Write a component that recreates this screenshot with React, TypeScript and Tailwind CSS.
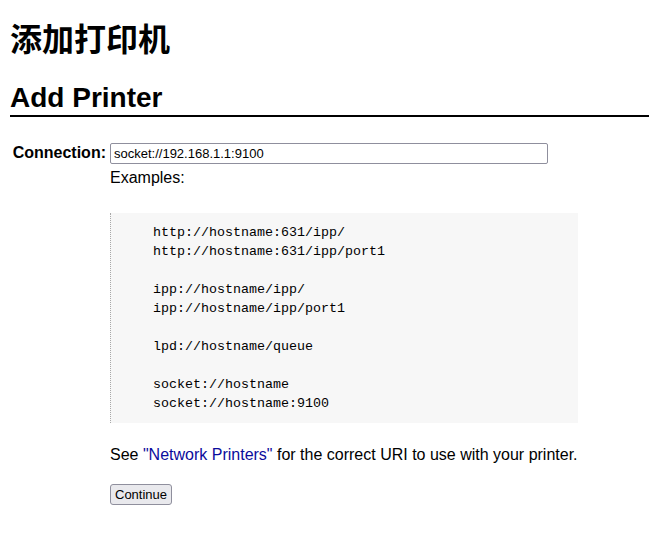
import React from 'react'

const examples = [
  'http://hostname:631/ipp/',
  'http://hostname:631/ipp/port1',
  '',
  'ipp://hostname/ipp/',
  'ipp://hostname/ipp/port1',
  '',
  'lpd://hostname/queue',
  '',
  'socket://hostname',
  'socket://hostname:9100',
]

const App: React.FC = () => {
  return (
    <div className="min-h-screen bg-white px-[10px] text-black font-['Liberation_Sans',Arial,sans-serif]">
      {/* Page titles */}
      <h1 className="pt-[21px] text-[32px] leading-[38px] font-bold font-['Liberation_Sans','Noto_Sans_CJK_SC',sans-serif]">
        添加打印机
      </h1>
      <h2 className="mt-[23px] -mr-[10px] border-b-2 border-black pb-[1px] text-[28px] leading-[32px] font-bold">
        Add Printer
      </h2>

      {/* Form */}
      <div className="mt-[26px] flex">
        <div className="w-[100px] pt-[1px] pr-[4px] text-right text-[16px] leading-[18px] font-bold">
          Connection:
        </div>
        <div className="flex flex-col">
          <input
            type="text"
            defaultValue="socket://192.168.1.1:9100"
            className="h-[21px] w-[438px] rounded-[2px] border border-[#8f8f9d] bg-white px-[3px] text-[13px] text-black outline-none font-['Liberation_Sans',Arial,sans-serif]"
          />
          <div className="mt-[5px] text-[16px] leading-[18px]">Examples:</div>

          <pre className="mt-[26px] w-[468px] border-l border-dotted border-[#a8a8a8] bg-[#f7f7f7] py-[10px] pl-[42px] text-[13.33px] leading-[19px] text-black font-['Liberation_Mono','Courier_New',monospace]">
            {examples.join('\n')}
          </pre>

          <p className="mt-[23px] text-[16px] leading-[18px]">
            See <a href="#" className="text-[#0b0b9c]">"Network Printers"</a> for the correct URI to use with your printer.
          </p>

          <div className="mt-[18px]">
            <button
              type="button"
              className="h-[21px] rounded-[3px] border border-[#8f8f9d] bg-[#e9e9ed] px-[4px] text-[13px] leading-[19px] text-black font-['Liberation_Sans',Arial,sans-serif]"
            >
              Continue
            </button>
          </div>
        </div>
      </div>
    </div>
  )
}

export default App
